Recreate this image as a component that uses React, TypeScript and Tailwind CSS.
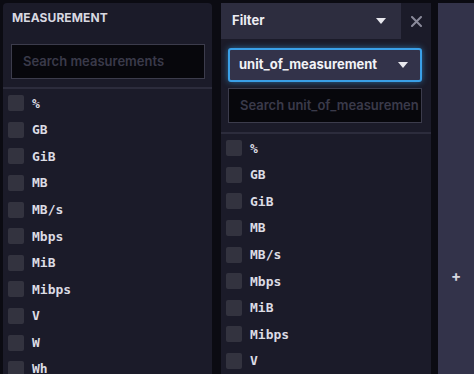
import React from 'react';

const units = ['%', 'GB', 'GiB', 'MB', 'MB/s', 'Mbps', 'MiB', 'Mibps', 'V', 'W', 'Wh'];

const Caret = () => (
  <svg width="10" height="6" viewBox="0 0 10 6" className="shrink-0">
    <path d="M0 0 L10 0 L5 6 Z" fill="#e8e8ee" />
  </svg>
);

const UnitList: React.FC<{ left: string }> = ({ left }) => (
  <div className={`flex flex-col shrink-0 ${left}`}>
    {units.map((u) => (
      <div key={u} className="flex items-center shrink-0 h-[26.6px] gap-[8px]">
        <div className="w-[16px] h-[16px] rounded-[2px] bg-[#33333f]" />
        <span className="text-[13px] font-bold text-[#dcdce4] [font-family:'DejaVu_Sans_Mono',monospace]">{u}</span>
      </div>
    ))}
  </div>
);

const App: React.FC = () => {
  return (
    <div className="w-[474px] h-[374px] overflow-hidden bg-[#0b0b12] flex pt-[3px] pl-[3px] [font-family:Inter,sans-serif]">
      {/* measurement panel */}
      <div className="w-[209px] shrink-0 bg-[#1b1b29] rounded-t-[4px] flex flex-col overflow-hidden">
        <div className="h-[26px] shrink-0 flex items-end px-[9px] pb-[2px]">
          <span className="text-[12px] font-bold text-[#d8d8e0] tracking-[0.1px]">MEASUREMENT</span>
        </div>
        <div className="mt-[15px] shrink-0 ml-[8px] mr-[7px] h-[35px] bg-[#07070c] border border-[#3c3c4c] flex items-center px-[11px]">
          <span className="text-[13px] font-semibold text-[#3a3a4a]">Search measurements</span>
        </div>
        <div className="mt-[8px] shrink-0 h-[2px] bg-[#2c2c3c]" />
        <UnitList left="pl-[5px] pt-[1px]" />
      </div>

      {/* filter panel */}
      <div className="w-[210px] ml-[9px] shrink-0 bg-[#1b1b29] flex flex-col overflow-hidden">
        <div className="flex shrink-0 h-[36px]">
          <div className="w-[180px] bg-[#2d2d3f] flex items-center justify-between pl-[11px] pr-[15px]">
            <span className="text-[13px] font-bold text-[#ececf2]">Filter</span>
            <Caret />
          </div>
          <div className="flex-1 flex items-center justify-center">
            <svg width="11" height="11" viewBox="0 0 11 11">
              <path d="M1 1 L10 10 M10 1 L1 10" stroke="#8a8a9a" strokeWidth="2" strokeLinecap="round" />
            </svg>
          </div>
        </div>
        <div className="mt-[9px] shrink-0 ml-[7px] mr-[9px] h-[34px] bg-[#33334a] border-2 border-[#3aa0e8] rounded-[3px] shadow-[0_0_6px_rgba(58,160,232,0.6)] flex items-center justify-between pl-[9px] pr-[12px]">
          <span className="text-[13px] font-bold text-[#f2f2f6]">unit_of_measurement</span>
          <Caret />
        </div>
        <div className="mt-[6px] shrink-0 ml-[7px] mr-[9px] h-[35px] bg-[#07070c] border border-[#3c3c4c] flex items-center pl-[11px] overflow-hidden">
          <span className="text-[13px] font-semibold text-[#3a3a4a] whitespace-nowrap">Search unit_of_measuremen</span>
        </div>
        <div className="mt-[9px] shrink-0 h-[2px] bg-[#2c2c3c]" />
        <UnitList left="pl-[5px] pt-[1px]" />
      </div>

      {/* add panel */}
      <div className="flex-1 ml-[7px] bg-[#33334a] flex flex-col items-center">
        <span className="mt-[262px] text-[15px] font-bold text-[#d8d8e0]">+</span>
      </div>
    </div>
  );
};

export default App;
